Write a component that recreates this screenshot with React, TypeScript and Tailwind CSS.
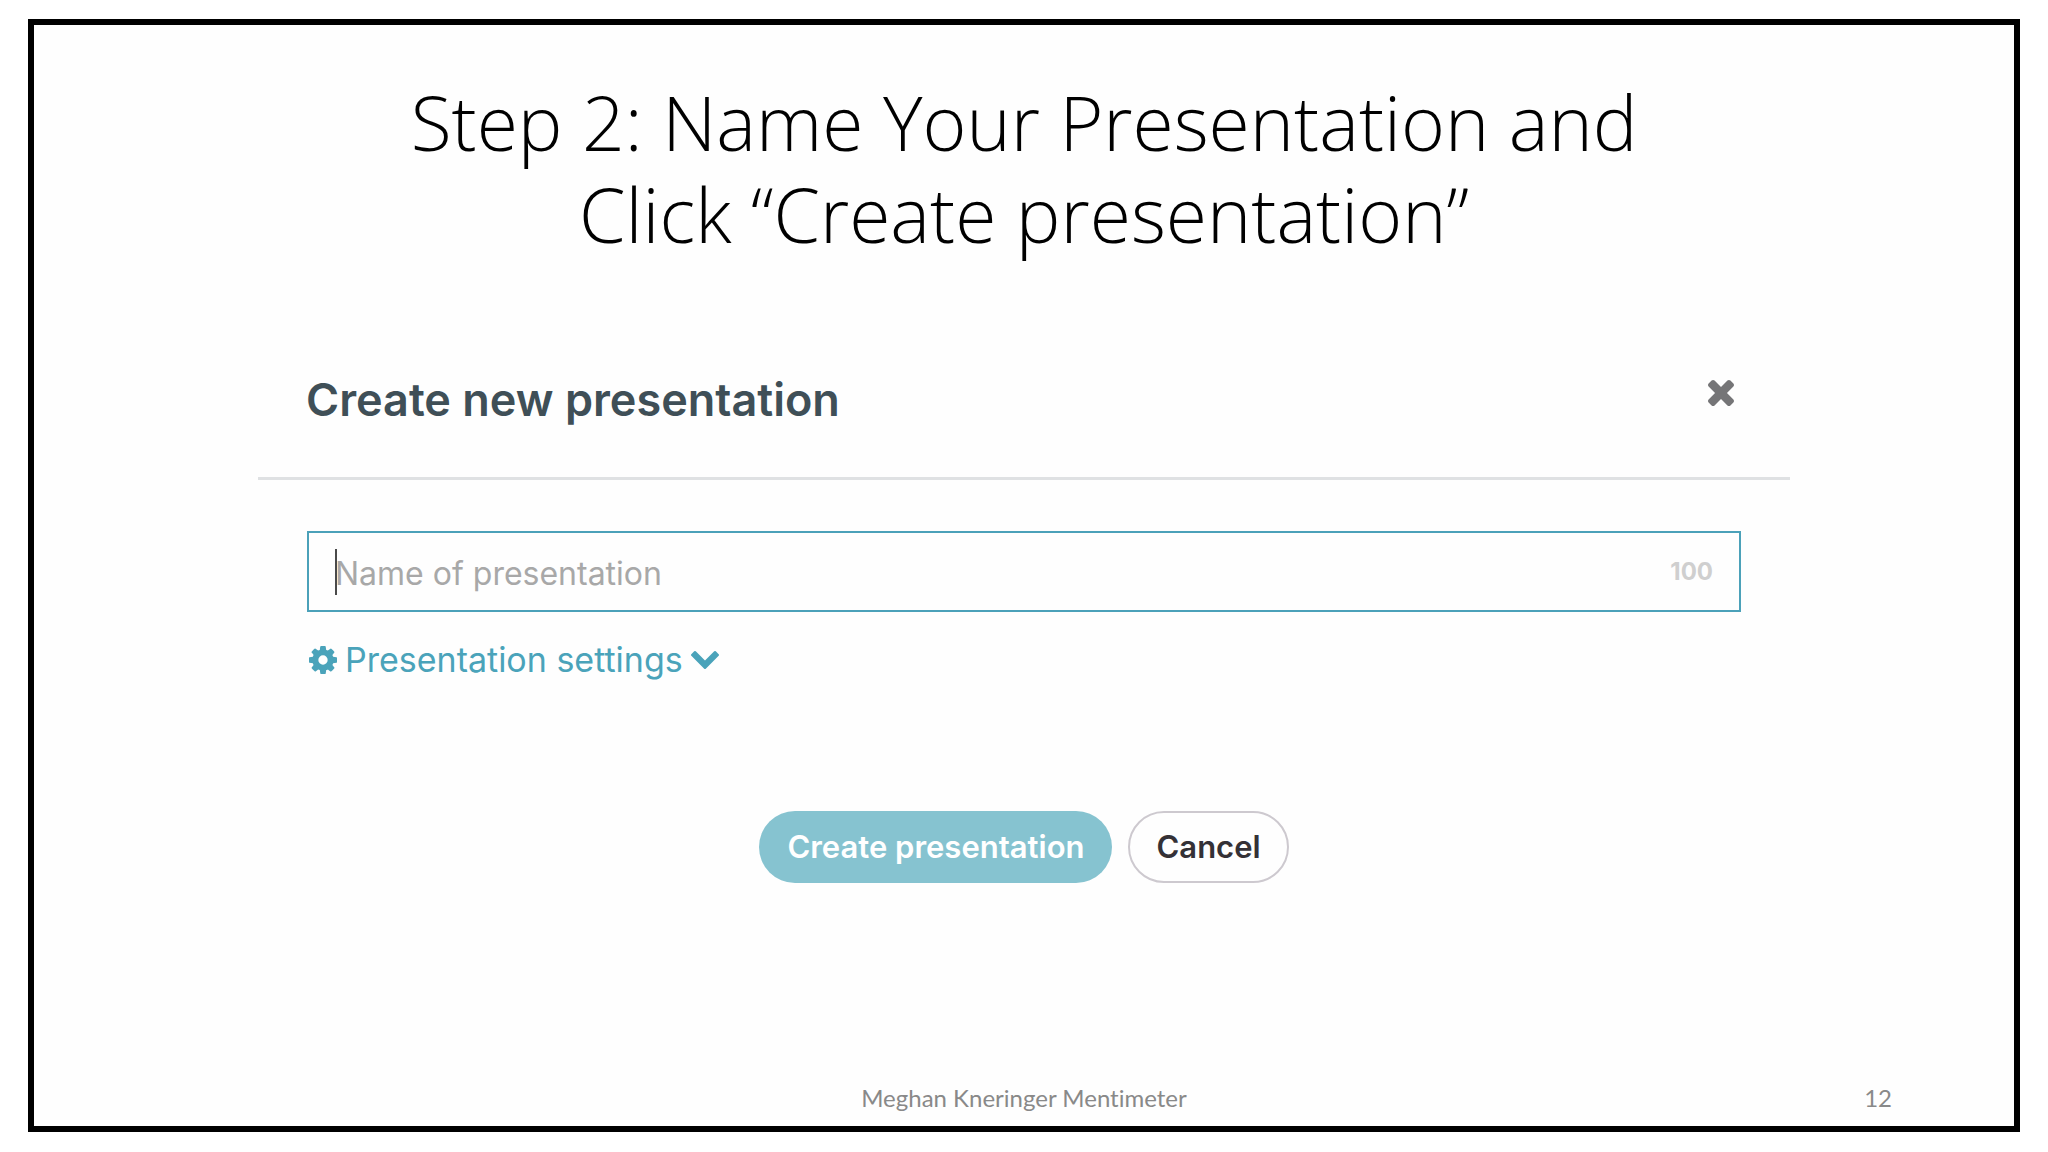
import { useState } from "react";

interface IconProps {
  className?: string;
}

function TimesIcon({ className }: IconProps) {
  return (
    <svg viewBox="302 366 1188 1188" fill="currentColor" className={className} aria-hidden="true">
      <path d="M1490 1322q0 40-28 68l-136 136q-28 28-68 28t-68-28l-294-294-294 294q-28 28-68 28t-68-28l-136-136q-28-28-28-68t28-68l294-294-294-294q-28-28-28-68t28-68l136-136q28-28 68-28t68 28l294 294 294-294q28-28 68-28t68 28l136 136q28 28 28 68t-28 68l-294 294 294 294q28 28 28 68z" />
    </svg>
  );
}

function CogIcon({ className }: IconProps) {
  return (
    <svg viewBox="128 128 1536 1536" fill="currentColor" className={className} aria-hidden="true">
      <path d="M1152 896q0-106-75-181t-181-75-181 75-75 181 75 181 181 75 181-75 75-181zm512-109v222q0 12-8 23t-20 13l-185 28q-19 54-39 91 35 50 107 138 10 12 10 25t-9 23q-27 37-99 108t-94 71q-12 0-26-9l-138-108q-44 23-91 38-16 136-29 186-7 28-36 28h-222q-14 0-24.5-8.5t-11.5-21.5l-28-184q-49-16-90-37l-141 107q-10 9-25 9-14 0-25-11-126-114-165-168-7-10-7-23 0-12 8-23 15-21 51-66.5t54-70.5q-27-50-41-99l-183-27q-13-2-21-12.5t-8-23.5v-222q0-12 8-23t19-13l186-28q14-46 39-92-40-57-107-138-10-12-10-24 0-10 9-23 26-36 98.5-107.5t94.5-71.5q13 0 26 10l138 107q44-23 91-38 16-136 29-186 7-28 36-28h222q14 0 24.5 8.5t11.5 21.5l28 184q49 16 90 37l142-107q9-9 24-9 13 0 25 10 129 119 165 170 7 8 7 22 0 12-8 23-15 21-51 66.5t-54 70.5q26 50 41 98l183 28q13 2 21 12.5t8 23.5z" />
    </svg>
  );
}

function ChevronDownIcon({ className }: IconProps) {
  return (
    <svg viewBox="90 533 1612 1035" fill="currentColor" className={className} aria-hidden="true">
      <path d="M1683 808l-742 741q-19 19-45 19t-45-19l-742-741q-19-19-19-45.5t19-45.5l166-165q19-19 45-19t45 19l531 531 531-531q19-19 45-19t45 19l166 165q19 19 19 45.5t-19 45.5z" />
    </svg>
  );
}

const MAX_LENGTH = 100;

function CreateDialog() {
  const [name, setName] = useState("");

  return (
    <section className="mx-56 mt-28 font-['Inter',sans-serif]">
      <header className="flex items-start justify-between border-b-3 border-[#dfe1e3] px-12 pb-[49px]">
        <h2 className="text-[45px] leading-[56px] font-semibold text-[#3f4f57]">
          Create new presentation
        </h2>
        <button type="button" aria-label="Close" className="p-2 text-[#757577]">
          <TimesIcon className="size-[26px]" />
        </button>
      </header>

      <form className="px-[49px] pt-[51px]" onSubmit={(e) => e.preventDefault()}>
        <div className="relative flex h-[81px] items-center border-2 border-[#4ba1b9] px-[26px]">
          <input
            type="text"
            aria-label="Name of presentation"
            placeholder="Name of presentation"
            maxLength={MAX_LENGTH}
            value={name}
            onChange={(e) => setName(e.target.value)}
            className="min-w-0 flex-1 bg-transparent pt-1 text-[32px] leading-10 text-gray-700 outline-none placeholder:text-[#a8a8a8]"
          />
          <span className="text-2xl font-bold text-[#cfcfcf]">
            {MAX_LENGTH - name.length}
          </span>
          {name === "" && (
            <span className="absolute left-[26px] h-[46px] w-0.5 bg-[#4a4a4a]" />
          )}
        </div>

        <button type="button" className="mt-7 flex items-center gap-2 pl-0.5 text-[34px] leading-10 text-[#4aa3ba]">
          <CogIcon className="size-7" />
          <span>Presentation settings</span>
          <ChevronDownIcon className="h-[18px] w-7" />
        </button>

        <div className="mt-[131px] flex justify-center gap-4">
          <button type="submit" className="h-[72px] rounded-full bg-[#86c3d0] px-7 text-[31px] font-semibold text-white">
            Create presentation
          </button>
          <button type="button" className="h-[72px] rounded-full border-2 border-[#cdc9cf] px-[26px] text-[31px] font-semibold text-[#343136]">
            Cancel
          </button>
        </div>
      </form>
    </section>
  );
}

export default function App() {
  return (
    <div className="flex min-h-screen flex-col bg-white px-7 pt-[19px] pb-5 font-['Lato',sans-serif] [font-variant-ligatures:none]">
      <main className="flex flex-1 flex-col border-6 border-black bg-[#fefefe]">
        <h1 className="pt-[51px] text-center font-['Open_Sans',sans-serif] text-[75px] leading-[92px] font-light text-black">
          Step 2: Name Your Presentation and
          <br />
          Click “Create presentation”
        </h1>

        <CreateDialog />

        <footer className="mt-auto grid grid-cols-3 items-center px-[122px] pb-3 text-2xl text-[#898989]">
          <span className="col-start-2 text-center">Meghan Kneringer Mentimeter</span>
          <span className="text-right">12</span>
        </footer>
      </main>
    </div>
  );
}
